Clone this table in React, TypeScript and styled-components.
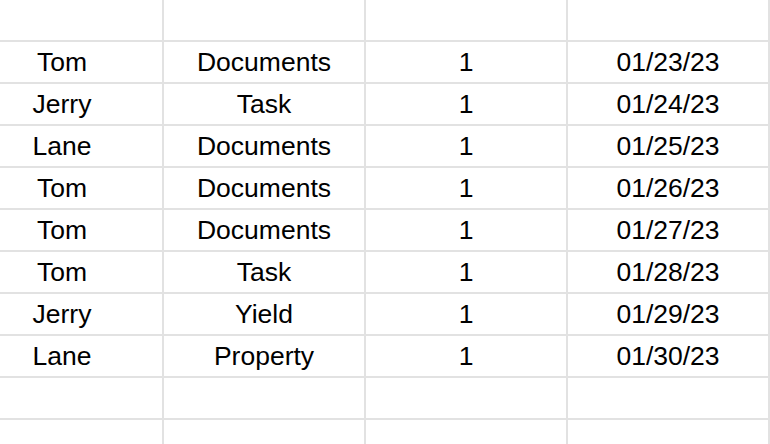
import React from "react";
import styled, { createGlobalStyle } from "styled-components";

const Global = createGlobalStyle`
  html, body {
    margin: 0;
    padding: 0;
    background: #ffffff;
    overflow: hidden;
  }
  body {
    font-family: "Liberation Sans", Arial, sans-serif;
  }
`;

const Sheet = styled.div`
  display: grid;
  grid-template-columns: 164px repeat(3, 202px);
  grid-auto-rows: 42px;
  width: 770px;
  height: 444px;
  overflow: hidden;
  background: #ffffff;
`;

/* $clipped: the first column is scrolled partly out of view (38px hidden on the left) */
const Cell = styled.div<{ $clipped?: boolean }>`
  display: flex;
  align-items: center;
  justify-content: center;
  box-sizing: border-box;
  padding-right: ${(p) => (p.$clipped ? "38px" : "0")};
  padding-top: 1px;
  border-right: 2px solid #e2e2e2;
  border-bottom: 2px solid #e2e2e2;
  font-family: "Liberation Sans", Arial, sans-serif;
  font-size: 26.5px;
  color: #000000;
  white-space: nowrap;
  overflow: hidden;
`;

const data: [string, string, string, string][] = [
  ["Tom", "Documents", "1", "01/23/23"],
  ["Jerry", "Task", "1", "01/24/23"],
  ["Lane", "Documents", "1", "01/25/23"],
  ["Tom", "Documents", "1", "01/26/23"],
  ["Tom", "Documents", "1", "01/27/23"],
  ["Tom", "Task", "1", "01/28/23"],
  ["Jerry", "Yield", "1", "01/29/23"],
  ["Lane", "Property", "1", "01/30/23"],
];

const rows: string[][] = [
  ["", "", "", ""],
  ...data,
  ["", "", "", ""],
  ["", "", "", ""],
];

export default function App() {
  return (
    <>
      <Global />
      <Sheet>
        {rows.map((r, i) =>
          r.map((v, j) => (
            <Cell key={`${i}-${j}`} $clipped={j === 0}>
              {v}
            </Cell>
          ))
        )}
      </Sheet>
    </>
  );
}
